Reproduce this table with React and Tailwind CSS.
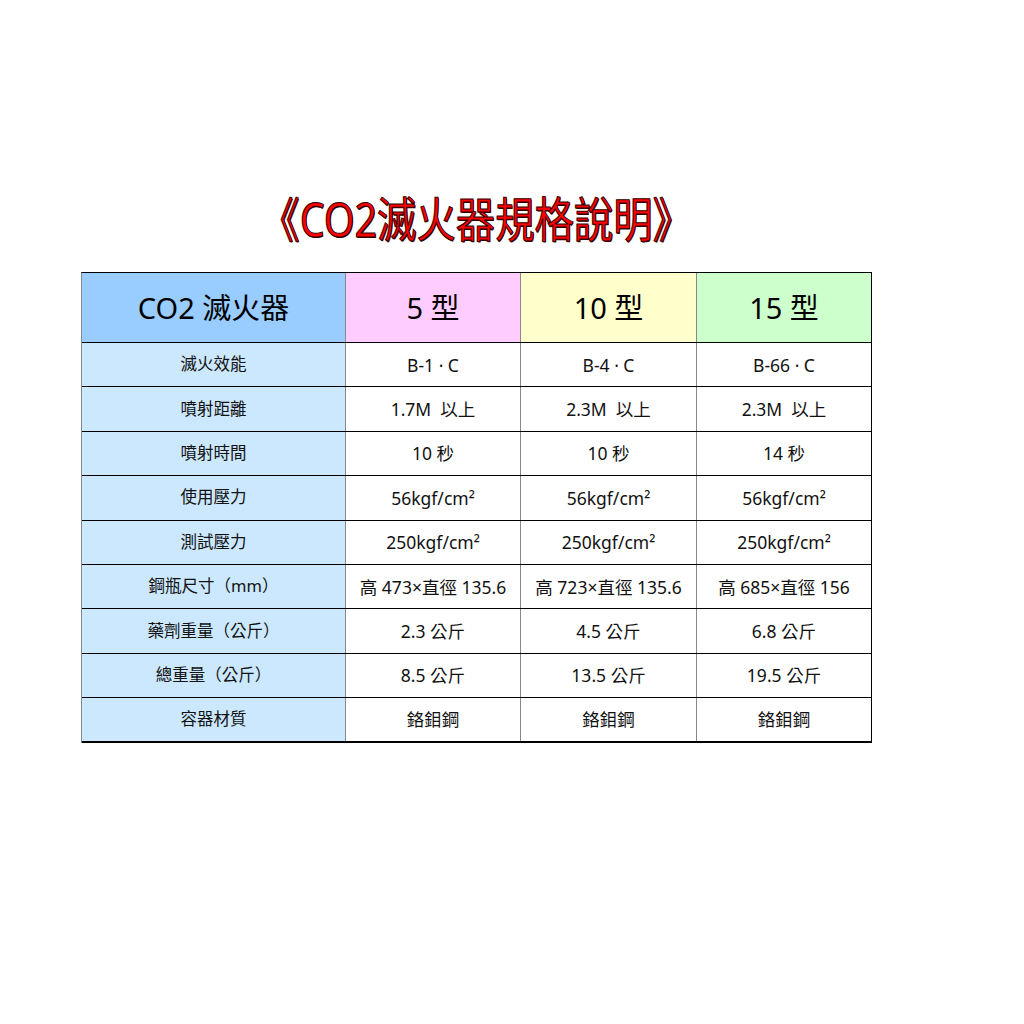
import React from 'react';

const font = { fontFamily: '"Noto Sans", "Noto Sans CJK TC", sans-serif' };

const rows = [
  ['滅火效能', 'B-1 · C', 'B-4 · C', 'B-66 · C'],
  ['噴射距離', '1.7M  以上', '2.3M  以上', '2.3M  以上'],
  ['噴射時間', '10 秒', '10 秒', '14 秒'],
  ['使用壓力', '56kgf/cm²', '56kgf/cm²', '56kgf/cm²'],
  ['測試壓力', '250kgf/cm²', '250kgf/cm²', '250kgf/cm²'],
  ['鋼瓶尺寸（mm）', '高 473×直徑 135.6', '高 723×直徑 135.6', '高 685×直徑 156'],
  ['藥劑重量（公斤）', '2.3 公斤', '4.5 公斤', '6.8 公斤'],
  ['總重量（公斤）', '8.5 公斤', '13.5 公斤', '19.5 公斤'],
  ['容器材質', '鉻鉬鋼', '鉻鉬鋼', '鉻鉬鋼'],
];

export default function App() {
  return (
    <div className="w-[1024px] h-[1024px] bg-white relative" style={font}>
      <div className="pt-[186px] w-[790px] ml-[81px] flex justify-center">
        <h1
          className="text-[48px] leading-[66px] font-normal text-[#ff0000] scale-x-[0.82] whitespace-nowrap"
          style={{ WebkitTextStroke: '1px #300000', textShadow: '1px 1px 0 #300000' }}
        >
          《CO2滅火器規格說明》
        </h1>
      </div>

      <div className="ml-[81px] mt-[20px] w-[791px] border-t border-black border-l border-l-[#888] border-r border-r-black">
        <div className="flex h-[70px] border-b border-black text-[29px] text-black">
          <div className="w-[264px] bg-[#99ccff] border-r border-[#888] flex items-center justify-center">CO2 滅火器</div>
          <div className="w-[175px] bg-[#ffccff] border-r border-[#888] flex items-center justify-center">5 型</div>
          <div className="w-[176px] bg-[#ffffcc] border-r border-[#888] flex items-center justify-center">10 型</div>
          <div className="flex-1 bg-[#ccffcc] flex items-center justify-center">15 型</div>
        </div>
        {rows.map((r, i) => (
          <div
            key={i}
            className={`flex h-[44.4px] border-b border-black text-[17.5px] text-[#111] ${i === rows.length - 1 ? 'border-b-2' : ''}`}
          >
            <div className="w-[264px] bg-[#cce8ff] border-r border-[#888] flex items-center justify-center text-[16.5px]">{r[0]}</div>
            <div className="w-[175px] border-r border-[#888] flex items-center justify-center whitespace-pre">{r[1]}</div>
            <div className="w-[176px] border-r border-[#888] flex items-center justify-center whitespace-pre">{r[2]}</div>
            <div className="flex-1 flex items-center justify-center whitespace-pre">{r[3]}</div>
          </div>
        ))}
      </div>
    </div>
  );
}
